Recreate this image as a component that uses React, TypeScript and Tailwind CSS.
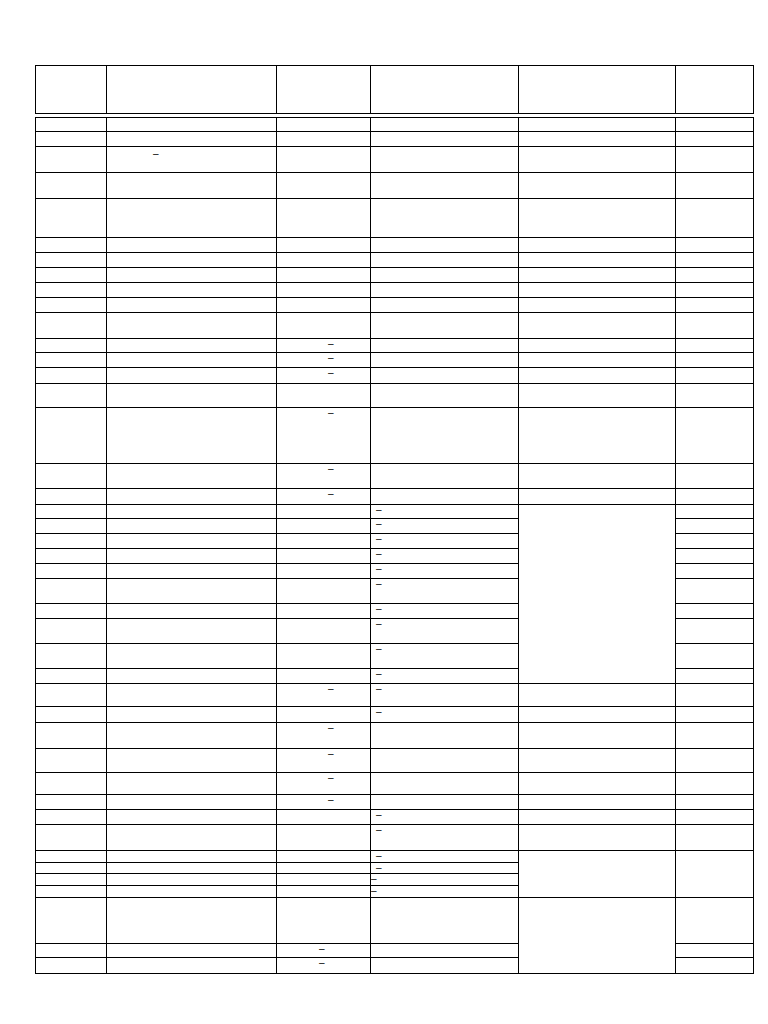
import React from "react";

type Dash = { col: number; pad: string };

interface RowSpec {
  dashes?: Dash[];
}

// column widths (px) incl. right border: 71, 170, 94, 148, 157, 78
const colWidths = "grid-cols-[71px_170px_94px_148px_157px_78px]";

const c3 = { col: 2, pad: "pl-[51px]" };
const c3b = { col: 2, pad: "pl-[42px]" };
const c4 = { col: 3, pad: "pl-[5px]" };
const c4b = { col: 3, pad: "pl-0" };

const rows: RowSpec[] = [
  {}, {}, { dashes: [{ col: 1, pad: "pl-[46px] pt-[2px]" }] }, {}, {}, {}, {}, {}, {}, {},
  {}, { dashes: [c3] }, { dashes: [c3] }, { dashes: [c3] }, {}, { dashes: [c3] },
  { dashes: [c3] }, { dashes: [c3] },
  { dashes: [c4] }, { dashes: [c4] }, { dashes: [c4] }, { dashes: [c4] }, { dashes: [c4] },
  { dashes: [c4] }, { dashes: [c4] }, { dashes: [c4] }, { dashes: [c4] }, { dashes: [c4] },
  { dashes: [c3, c4] }, { dashes: [c4] },
  { dashes: [c3] }, { dashes: [c3] }, { dashes: [c3] }, { dashes: [c3] },
  { dashes: [c4] }, { dashes: [c4] }, { dashes: [c4] }, { dashes: [c4] },
  { dashes: [c4b] }, { dashes: [c4b] },
  {}, { dashes: [c3b] }, { dashes: [c3b] },
];

// cells that start a row-span: "row-col"
const spans: Record<string, string> = {
  "18-4": "row-span-10",
  "36-4": "row-span-4",
  "36-5": "row-span-4",
  "40-4": "row-span-3",
};

function covered(r: number, c: number) {
  if (c === 4 && r > 18 && r < 28) return true;
  if (c === 4 && r > 36 && r < 40) return true;
  if (c === 5 && r > 36 && r < 40) return true;
  if (c === 4 && r > 40 && r < 43) return true;
  return false;
}

function Cell({ dash, span }: { dash?: Dash; span?: string }) {
  return (
    <div className={`border-r border-b border-black overflow-hidden ${span ?? ""}`}>
      {dash && (
        <div className={`${dash.pad} text-[10px] leading-[9px] text-black`}>–</div>
      )}
    </div>
  );
}

export default function App() {
  const cells: React.ReactNode[] = [];
  rows.forEach((row, r) => {
    for (let c = 0; c < 6; c++) {
      if (covered(r, c)) continue;
      const dash = row.dashes?.find((d) => d.col === c);
      cells.push(<Cell key={`${r}-${c}`} dash={dash} span={spans[`${r}-${c}`]} />);
    }
  });

  return (
    <div
      className="min-h-screen bg-white pt-[65px] pl-[35px]"
      style={{ fontFamily: '"Liberation Sans", Arial, sans-serif' }}
    >
      <div className={`grid ${colWidths} w-[719px] border-l border-t border-black`}>
        {[0, 1, 2, 3, 4, 5].map((c) => (
          <div key={c} className="h-[48px] border-r border-b border-black" />
        ))}
      </div>

      <div
        className={`mt-[3px] grid ${colWidths} grid-rows-[14px_15px_26px_26px_39px_15px_15px_15px_15px_15px_26px_14px_15px_16px_24px_56px_25px_16px_14px_15px_15px_15px_15px_25px_15px_25px_25px_15px_23px_16px_26px_24px_22px_15px_15px_26px_12px_11px_12px_12px_46px_14px_16px] w-[719px] border-l border-t border-black`}
      >
        {cells}
      </div>
    </div>
  );
}
